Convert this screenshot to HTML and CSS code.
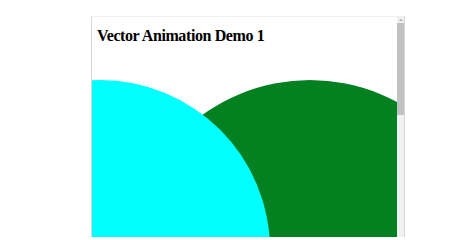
FILE: index.html
```html
<!DOCTYPE html>
<html>
<head>
<meta charset="utf-8">
<link rel="stylesheet" href="styles.css">
</head>
<body>
<div class="page">
  <div class="frame">
    <div class="content">
      <h1 class="title">Vector Animation Demo 1</h1>
      <svg class="stage" width="305" height="192" viewBox="0 0 305 192">
        <circle cx="218" cy="217" r="183" fill="#03801f"/>
        <circle cx="8" cy="204" r="170" fill="#00ffff"/>
      </svg>
    </div>
    <div class="scrollbar">
      <div class="arrow"></div>
      <div class="thumb"></div>
    </div>
  </div>
</div>
</body>
</html>
```

FILE: styles.css
```css
html, body {
  margin: 0;
  padding: 0;
  background: #ffffff;
  overflow: hidden;
}
.page {
  padding: 16px 0 0 91px;
  height: 237px;
  box-sizing: border-box;
}
.frame {
  width: 314px;
  height: 221px;
  box-sizing: border-box;
  border-left: 1px solid #d6d6d6;
  border-top: 1px solid #f0f0f0;
  border-right: 1px solid #d6d6d6;
  display: flex;
  overflow: hidden;
}
.content {
  width: 305px;
  flex: none;
  display: flex;
  flex-direction: column;
  overflow: hidden;
}
.title {
  margin: 9px 0 0 0;
  padding-left: 5px;
  font-family: "Liberation Serif", "Times New Roman", serif;
  font-weight: bold;
  font-size: 16px;
  letter-spacing: -0.4px;
  line-height: 20px;
  color: #000;
}
.stage {
  display: block;
  flex: none;
}
.scrollbar {
  width: 7px;
  flex: none;
  background: #f1f1f1;
  display: flex;
  flex-direction: column;
  align-items: center;
}
.arrow {
  width: 0;
  height: 0;
  margin-top: 2px;
  border-left: 2px solid transparent;
  border-right: 2px solid transparent;
  border-bottom: 2px solid #a3a3a3;
}
.thumb {
  margin-top: 2px;
  width: 7px;
  height: 92px;
  background: #c1c1c1;
}
```
